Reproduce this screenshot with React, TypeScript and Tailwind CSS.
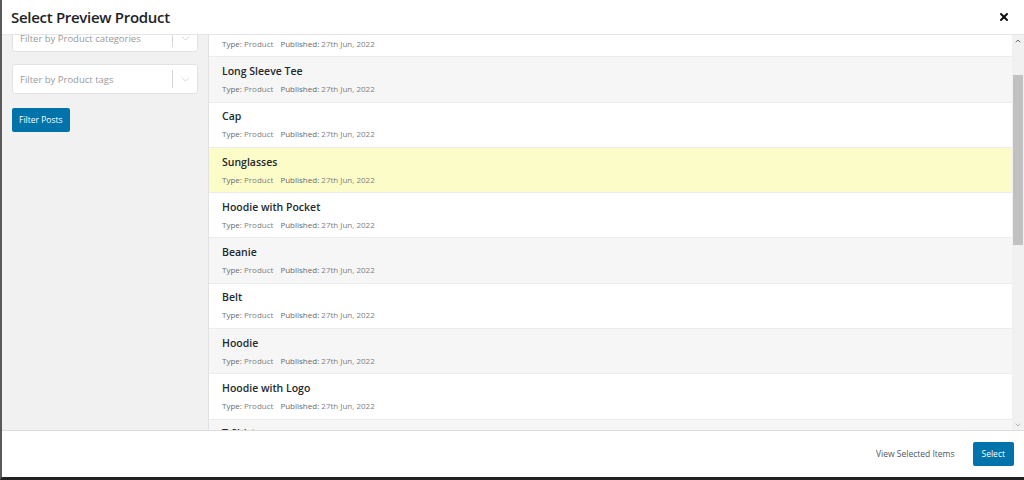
import { ChevronDown, ChevronUp, X } from "lucide-react";

type Product = { id: string; title: string; highlight?: boolean };

const PRODUCTS: Product[] = [
  { id: "p0", title: "V-Neck T-Shirt" },
  { id: "p1", title: "Long Sleeve Tee" },
  { id: "p2", title: "Cap" },
  { id: "p3", title: "Sunglasses", highlight: true },
  { id: "p4", title: "Hoodie with Pocket" },
  { id: "p5", title: "Beanie" },
  { id: "p6", title: "Belt" },
  { id: "p7", title: "Hoodie" },
  { id: "p8", title: "Hoodie with Logo" },
  { id: "p9", title: "T-Shirt" },
];

function FilterSelect({ label, className = "h-[30px]" }: { label: string; className?: string }) {
  return (
    <div className={"flex items-center rounded-[3px] border border-[#e2e2e2] bg-white " + className}>
      <span className="flex-1 truncate pl-[7px] pt-[3px] text-[9.5px] text-[#9a9a9a]">{label}</span>
      <span className="h-[18px] w-px bg-[#d6d6d6]" />
      <span className="flex w-[24px] justify-center text-[#c4c4c4]">
        <ChevronDown size={13} strokeWidth={1.25} />
      </span>
    </div>
  );
}

export default function App() {
  return (
    <div
      className="flex h-[480px] w-[1024px] flex-col overflow-hidden border-b-[3px] border-l-2 border-b-[#222] border-l-[#5a5a5a] bg-white text-[#23282d]"
      style={{ fontFamily: '"Open Sans", "Noto Sans", sans-serif' }}
    >
      {/* Header */}
      <div className="relative z-10 flex h-[35px] shrink-0 items-center justify-between border-b border-[#e5e5e5] bg-white pl-[9px] pr-[14px]">
        <h1 className="text-[15px] font-semibold tracking-[-0.3px] text-[#1d2327]">Select Preview Product</h1>
        <X size={12} strokeWidth={4} className="text-[#111]" />
      </div>

      {/* Body */}
      <div className="flex min-h-0 flex-1">
        <aside className="w-[207px] shrink-0 overflow-hidden border-r border-[#e2e2e2] bg-[#f1f1f1] px-[10px]">
          <div className="-mt-[11px] flex flex-col gap-[12px]">
            <FilterSelect label="Filter by Product categories" className="h-[28px]" />
            <FilterSelect label="Filter by Product tags" />
            <div className="-mt-[1px]">
              <button className="h-[24px] rounded-[2px] bg-[#0073aa] px-[7px] text-[8.5px] text-white">
                Filter Posts
              </button>
            </div>
          </div>
        </aside>

        <div className="min-w-0 flex-1 overflow-hidden">
          <div className="-mt-[23px]">
            {PRODUCTS.map((p, i) => (
              <div
                key={p.id}
                className={
                  "flex h-[45.3px] flex-col justify-center gap-[6px] border-b border-[#ececec] px-[13px] " +
                  (p.highlight ? "bg-[#fcfcc9]" : i % 2 === 1 ? "bg-[#f6f6f6]" : "bg-white")
                }
              >
                <div className="text-[10.5px] font-semibold leading-[13px] text-[#23282d]">{p.title}</div>
                <div className="text-[8px] leading-[10px] text-[#808080]">
                  <span className="font-medium text-[#6a6a6a]">Type:</span> Product
                  <span className="ml-[7px] font-medium text-[#6a6a6a]">Published:</span> 27th Jun, 2022
                </div>
              </div>
            ))}
          </div>
        </div>

        {/* Scrollbar */}
        <div className="flex w-[12px] shrink-0 flex-col items-center bg-[#f1f1f1]">
          <ChevronUp size={8} strokeWidth={2.5} className="mt-[2px] text-[#505050]" />
          <div className="mt-[30px] h-[170px] w-[10px] bg-[#c1c1c1]" />
          <div className="flex-1" />
          <ChevronDown size={8} strokeWidth={2.5} className="mb-[1px] text-[#a3a3a3]" />
        </div>
      </div>

      {/* Footer */}
      <div className="flex h-[47px] shrink-0 items-center justify-end gap-[18px] border-t border-[#dcdcdc] bg-white pr-[10px]">
        <span className="text-[8.5px] text-[#50575e]">View Selected Items</span>
        <button className="h-[24px] rounded-[2px] bg-[#0073aa] px-[9px] text-[8.5px] text-white">Select</button>
      </div>
    </div>
  );
}
